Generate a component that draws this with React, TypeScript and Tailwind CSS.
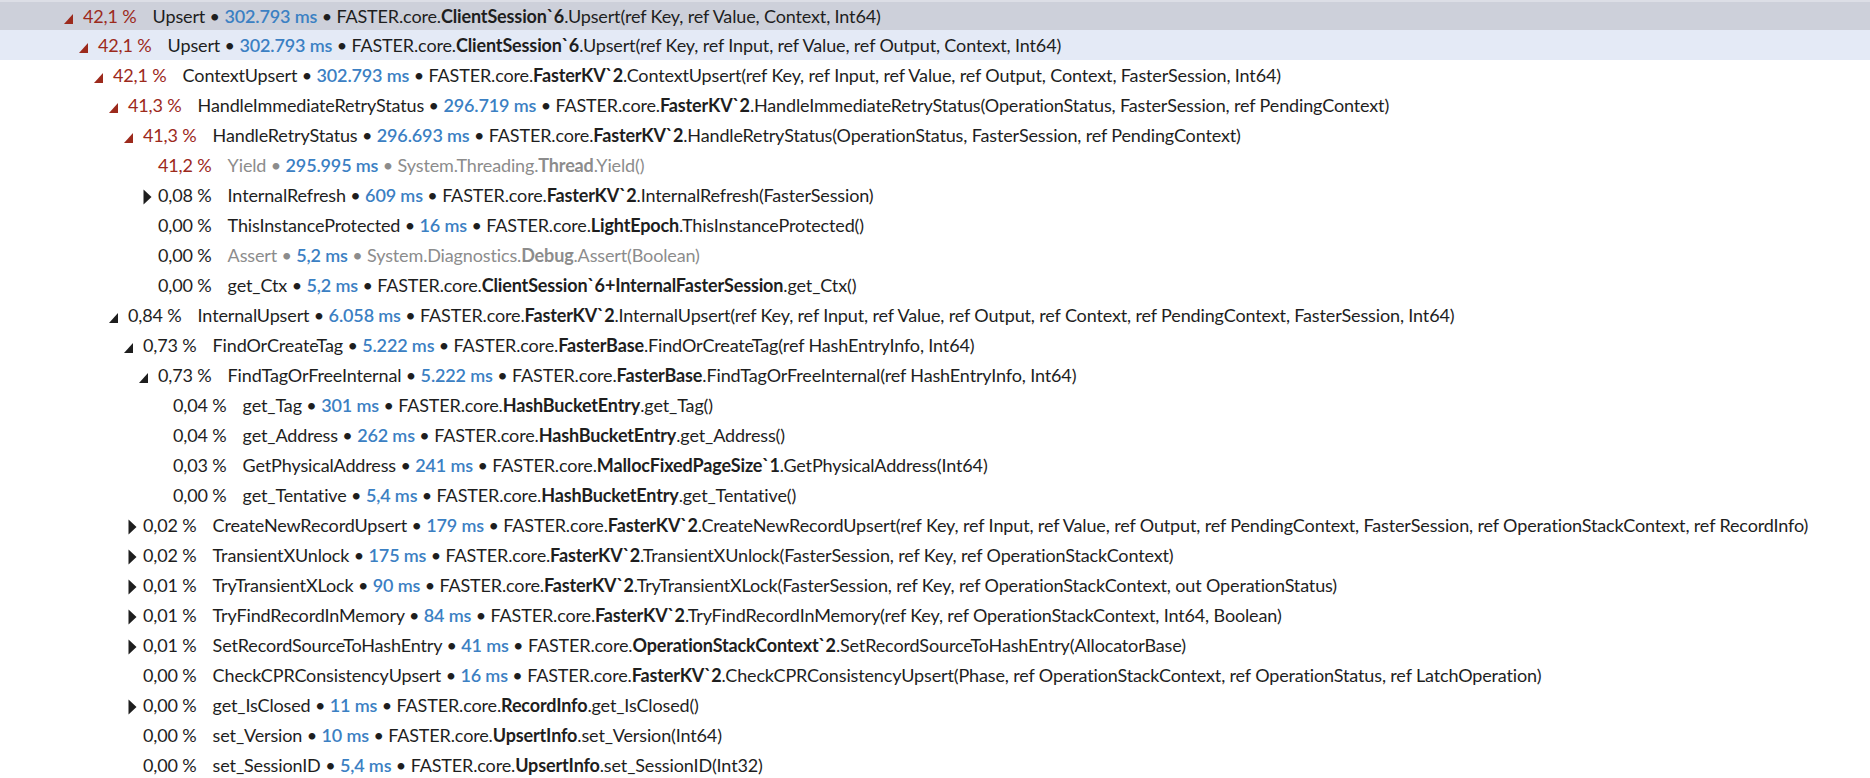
import React from "react";

type Row = {
  l: number;
  t: "e" | "c" | "n";
  pct: string;
  name: string;
  ms: string;
  ns?: string;
  type: string;
  rest: string;
  hot?: boolean;
  gray?: boolean;
  bg?: "sel" | "hover";
};

const F = "FASTER.core.";

const rows: Row[] = [
  { l: 0, t: "e", hot: true, bg: "sel", pct: "42,1 %", name: "Upsert", ms: "302.793 ms", type: "ClientSession`6", rest: ".Upsert(ref Key, ref Value, Context, Int64)" },
  { l: 1, t: "e", hot: true, bg: "hover", pct: "42,1 %", name: "Upsert", ms: "302.793 ms", type: "ClientSession`6", rest: ".Upsert(ref Key, ref Input, ref Value, ref Output, Context, Int64)" },
  { l: 2, t: "e", hot: true, pct: "42,1 %", name: "ContextUpsert", ms: "302.793 ms", type: "FasterKV`2", rest: ".ContextUpsert(ref Key, ref Input, ref Value, ref Output, Context, FasterSession, Int64)" },
  { l: 3, t: "e", hot: true, pct: "41,3 %", name: "HandleImmediateRetryStatus", ms: "296.719 ms", type: "FasterKV`2", rest: ".HandleImmediateRetryStatus(OperationStatus, FasterSession, ref PendingContext)" },
  { l: 4, t: "e", hot: true, pct: "41,3 %", name: "HandleRetryStatus", ms: "296.693 ms", type: "FasterKV`2", rest: ".HandleRetryStatus(OperationStatus, FasterSession, ref PendingContext)" },
  { l: 5, t: "n", hot: true, gray: true, pct: "41,2 %", name: "Yield", ms: "295.995 ms", ns: "System.Threading.", type: "Thread", rest: ".Yield()" },
  { l: 5, t: "c", pct: "0,08 %", name: "InternalRefresh", ms: "609 ms", type: "FasterKV`2", rest: ".InternalRefresh(FasterSession)" },
  { l: 5, t: "n", pct: "0,00 %", name: "ThisInstanceProtected", ms: "16 ms", type: "LightEpoch", rest: ".ThisInstanceProtected()" },
  { l: 5, t: "n", gray: true, pct: "0,00 %", name: "Assert", ms: "5,2 ms", ns: "System.Diagnostics.", type: "Debug", rest: ".Assert(Boolean)" },
  { l: 5, t: "n", pct: "0,00 %", name: "get_Ctx", ms: "5,2 ms", type: "ClientSession`6+InternalFasterSession", rest: ".get_Ctx()" },
  { l: 3, t: "e", pct: "0,84 %", name: "InternalUpsert", ms: "6.058 ms", type: "FasterKV`2", rest: ".InternalUpsert(ref Key, ref Input, ref Value, ref Output, ref Context, ref PendingContext, FasterSession, Int64)" },
  { l: 4, t: "e", pct: "0,73 %", name: "FindOrCreateTag", ms: "5.222 ms", type: "FasterBase", rest: ".FindOrCreateTag(ref HashEntryInfo, Int64)" },
  { l: 5, t: "e", pct: "0,73 %", name: "FindTagOrFreeInternal", ms: "5.222 ms", type: "FasterBase", rest: ".FindTagOrFreeInternal(ref HashEntryInfo, Int64)" },
  { l: 6, t: "n", pct: "0,04 %", name: "get_Tag", ms: "301 ms", type: "HashBucketEntry", rest: ".get_Tag()" },
  { l: 6, t: "n", pct: "0,04 %", name: "get_Address", ms: "262 ms", type: "HashBucketEntry", rest: ".get_Address()" },
  { l: 6, t: "n", pct: "0,03 %", name: "GetPhysicalAddress", ms: "241 ms", type: "MallocFixedPageSize`1", rest: ".GetPhysicalAddress(Int64)" },
  { l: 6, t: "n", pct: "0,00 %", name: "get_Tentative", ms: "5,4 ms", type: "HashBucketEntry", rest: ".get_Tentative()" },
  { l: 4, t: "c", pct: "0,02 %", name: "CreateNewRecordUpsert", ms: "179 ms", type: "FasterKV`2", rest: ".CreateNewRecordUpsert(ref Key, ref Input, ref Value, ref Output, ref PendingContext, FasterSession, ref OperationStackContext, ref RecordInfo)" },
  { l: 4, t: "c", pct: "0,02 %", name: "TransientXUnlock", ms: "175 ms", type: "FasterKV`2", rest: ".TransientXUnlock(FasterSession, ref Key, ref OperationStackContext)" },
  { l: 4, t: "c", pct: "0,01 %", name: "TryTransientXLock", ms: "90 ms", type: "FasterKV`2", rest: ".TryTransientXLock(FasterSession, ref Key, ref OperationStackContext, out OperationStatus)" },
  { l: 4, t: "c", pct: "0,01 %", name: "TryFindRecordInMemory", ms: "84 ms", type: "FasterKV`2", rest: ".TryFindRecordInMemory(ref Key, ref OperationStackContext, Int64, Boolean)" },
  { l: 4, t: "c", pct: "0,01 %", name: "SetRecordSourceToHashEntry", ms: "41 ms", type: "OperationStackContext`2", rest: ".SetRecordSourceToHashEntry(AllocatorBase)" },
  { l: 4, t: "n", pct: "0,00 %", name: "CheckCPRConsistencyUpsert", ms: "16 ms", type: "FasterKV`2", rest: ".CheckCPRConsistencyUpsert(Phase, ref OperationStackContext, ref OperationStatus, ref LatchOperation)" },
  { l: 4, t: "c", pct: "0,00 %", name: "get_IsClosed", ms: "11 ms", type: "RecordInfo", rest: ".get_IsClosed()" },
  { l: 4, t: "n", pct: "0,00 %", name: "set_Version", ms: "10 ms", type: "UpsertInfo", rest: ".set_Version(Int64)" },
  { l: 4, t: "n", pct: "0,00 %", name: "set_SessionID", ms: "5,4 ms", type: "UpsertInfo", rest: ".set_SessionID(Int32)" },
];

const indent = [
  "pl-[64px]",
  "pl-[79px]",
  "pl-[94px]",
  "pl-[109px]",
  "pl-[124px]",
  "pl-[139px]",
  "pl-[154px]",
];

function Toggle({ t, hot }: { t: Row["t"]; hot?: boolean }) {
  const color = hot ? "#9c2a1c" : "#1e1e1e";
  return (
    <div className="relative h-[30px] w-[19px] shrink-0">
      {t === "e" && (
        <svg className="absolute left-0 top-[13px]" width="9" height="10" viewBox="0 0 9 10">
          <path d="M9 0 L9 10 L0 10 Z" fill={color} />
        </svg>
      )}
      {t === "c" && (
        <svg className="absolute left-[4px] top-[9px]" width="9" height="16" viewBox="0 0 9 16">
          <path d="M0.5 0.5 L8.5 8 L0.5 15.5 Z" fill="#1e1e1e" />
        </svg>
      )}
    </div>
  );
}

function TreeRow({ r }: { r: Row }) {
  const bg =
    r.bg === "sel"
      ? "bg-[#cdd0da] border-t-2 border-[#dcdee6]"
      : r.bg === "hover"
      ? "bg-[#e4eaf6]"
      : "bg-white";
  const textColor = r.gray ? "text-[#8c8c8c]" : "text-[#1e1e1e]";
  return (
    <div className={`flex h-[30px] items-center whitespace-nowrap ${bg} ${indent[r.l]}`}>
      <Toggle t={r.t} hot={r.hot} />
      <span className={r.hot ? "text-[#9c2a1c]" : "text-[#1e1e1e]"}>{r.pct}</span>
      <span className={`ml-[16px] ${textColor}`}>
        {r.name}
        {" • "}
        <span className="font-semibold text-[#3b80c3]">{r.ms}</span>
        {" • "}
        {r.ns ?? F}
        <span className="font-bold">{r.type}</span>
        {r.rest}
      </span>
    </div>
  );
}

export default function App() {
  return (
    <div
      className="w-[1870px] h-[778px] overflow-hidden bg-white text-[18px] leading-[30px] tracking-[-0.14px]"
      style={{ fontFamily: "Lato, 'Noto Sans', sans-serif" }}
    >
      {rows.map((r, i) => (
        <TreeRow key={i} r={r} />
      ))}
    </div>
  );
}
